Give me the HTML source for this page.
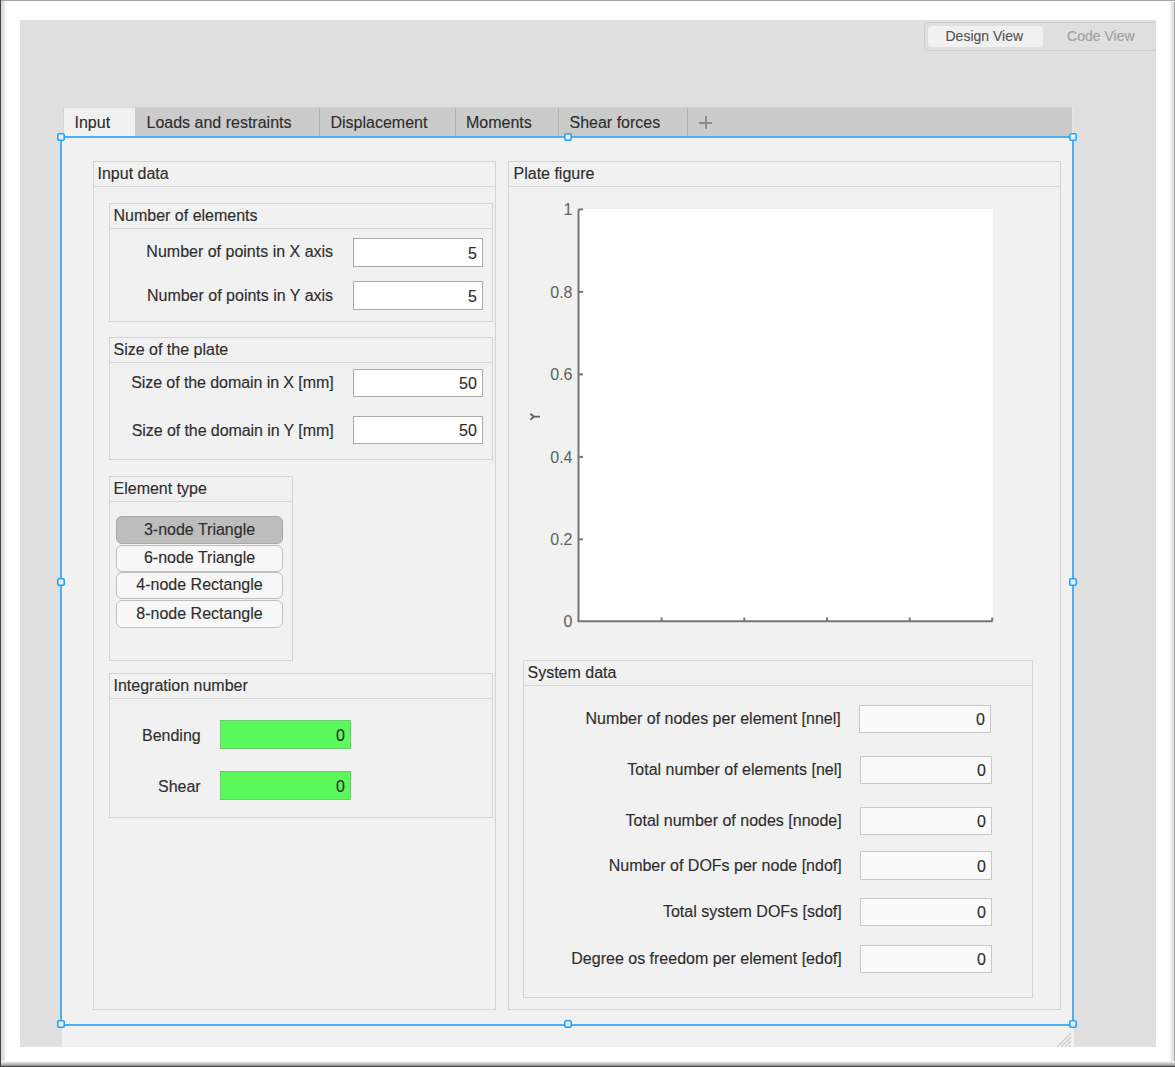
<!DOCTYPE html>
<html><head><meta charset="utf-8"><title>App Designer</title>
<style>
html,body{margin:0;padding:0;}
body{width:1175px;height:1067px;position:relative;overflow:hidden;background:#fff;font-family:"Liberation Sans", sans-serif;}
body>div{position:absolute;}
.t{white-space:nowrap;-webkit-text-stroke:0.15px currentColor;}
</style></head><body>
<div style="left:0px;top:0px;width:1175px;height:1067px;background:#ffffff;"></div>
<div style="left:20px;top:20px;width:1136px;height:1027px;background:#dfdfdf;"></div>
<div style="left:924px;top:22px;width:260px;height:29px;border:1px solid #cecece;border-radius:5px;box-sizing:border-box;background:#dfdfdf;"></div>
<div style="left:928px;top:26px;width:115px;height:21px;background:#f1f1f1;border-radius:4px;"></div>
<div class="t" style="left:945.50px;top:28.55px;font-size:14px;line-height:14px;color:#555555;">Design View</div>
<div class="t" style="left:1067.10px;top:28.55px;font-size:14px;line-height:14px;color:#a0a0a0;">Code View</div>
<div style="left:1156px;top:20px;width:19px;height:40px;background:#ffffff;"></div>
<div style="left:62px;top:136px;width:1012px;height:911px;background:#f1f1f1;"></div>
<div style="left:63px;top:107px;width:1010px;height:30px;background:#cbcbcb;"></div>
<div style="left:1072px;top:107px;width:2px;height:30px;background:#e4e4e4;"></div>
<div style="left:63px;top:107px;width:72px;height:30px;background:#f1f1f1;border-left:1px solid #d3d3d3;border-top:1px solid #dadada;box-sizing:border-box;"></div>
<div style="left:319px;top:108px;width:1px;height:28px;background:#aeaeae;"></div>
<div style="left:455px;top:108px;width:1px;height:28px;background:#aeaeae;"></div>
<div style="left:558px;top:108px;width:1px;height:28px;background:#aeaeae;"></div>
<div style="left:687px;top:108px;width:1px;height:28px;background:#aeaeae;"></div>
<div class="t" style="left:74.50px;top:115.15px;font-size:16px;line-height:16px;color:#2e2e2e;">Input</div>
<div class="t" style="left:146.50px;top:115.15px;font-size:16px;line-height:16px;color:#2e2e2e;">Loads and restraints</div>
<div class="t" style="left:330.50px;top:115.15px;font-size:16px;line-height:16px;color:#2e2e2e;">Displacement</div>
<div class="t" style="left:466.00px;top:115.15px;font-size:16px;line-height:16px;color:#2e2e2e;">Moments</div>
<div class="t" style="left:569.50px;top:115.15px;font-size:16px;line-height:16px;color:#2e2e2e;">Shear forces</div>
<div style="left:699px;top:122px;width:13px;height:2px;background:#8c8c8c;"></div>
<div style="left:705px;top:116px;width:2px;height:13px;background:#8c8c8c;"></div>
<div style="left:93px;top:161px;width:403px;height:849px;border:1px solid #d3d3d3;box-sizing:border-box;"></div>
<div style="left:93px;top:186px;width:403px;height:1px;background:#d6d6d6;"></div>
<div class="t" style="left:97.50px;top:165.75px;font-size:16px;line-height:16px;color:#2e2e2e;">Input data</div>
<div style="left:508px;top:161px;width:553px;height:849px;border:1px solid #d3d3d3;box-sizing:border-box;"></div>
<div style="left:508px;top:186px;width:553px;height:1px;background:#d6d6d6;"></div>
<div class="t" style="left:513.50px;top:165.75px;font-size:16px;line-height:16px;color:#2e2e2e;">Plate figure</div>
<div style="left:109px;top:203px;width:384px;height:119px;border:1px solid #d3d3d3;box-sizing:border-box;"></div>
<div style="left:109px;top:228px;width:384px;height:1px;background:#d6d6d6;"></div>
<div class="t" style="left:113.50px;top:207.75px;font-size:16px;line-height:16px;color:#2e2e2e;">Number of elements</div>
<div style="left:109px;top:337px;width:384px;height:123px;border:1px solid #d3d3d3;box-sizing:border-box;"></div>
<div style="left:109px;top:362px;width:384px;height:1px;background:#d6d6d6;"></div>
<div class="t" style="left:113.50px;top:341.75px;font-size:16px;line-height:16px;color:#2e2e2e;">Size of the plate</div>
<div style="left:109px;top:476px;width:184px;height:185px;border:1px solid #d3d3d3;box-sizing:border-box;"></div>
<div style="left:109px;top:501px;width:184px;height:1px;background:#d6d6d6;"></div>
<div class="t" style="left:113.50px;top:480.75px;font-size:16px;line-height:16px;color:#2e2e2e;">Element type</div>
<div style="left:109px;top:673px;width:384px;height:145px;border:1px solid #d3d3d3;box-sizing:border-box;"></div>
<div style="left:109px;top:698px;width:384px;height:1px;background:#d6d6d6;"></div>
<div class="t" style="left:113.50px;top:677.75px;font-size:16px;line-height:16px;color:#2e2e2e;">Integration number</div>
<div style="left:523px;top:660px;width:510px;height:338px;border:1px solid #d3d3d3;box-sizing:border-box;"></div>
<div style="left:523px;top:685px;width:510px;height:1px;background:#d6d6d6;"></div>
<div class="t" style="left:527.50px;top:664.75px;font-size:16px;line-height:16px;color:#2e2e2e;">System data</div>
<div class="t" style="left:-466.90px;width:800px;text-align:right;top:244.35px;font-size:16px;line-height:16px;color:#2e2e2e;">Number of points in X axis</div>
<div class="t" style="left:-466.90px;width:800px;text-align:right;top:287.55px;font-size:16px;line-height:16px;color:#2e2e2e;">Number of points in Y axis</div>
<div style="left:353px;top:238px;width:130px;height:29px;background:#ffffff;border:1px solid #aaaaaa;box-sizing:border-box;"></div>
<div class="t" style="left:-323.20px;width:800px;text-align:right;top:246.35px;font-size:16px;line-height:16px;color:#2e2e2e;">5</div>
<div style="left:353px;top:281px;width:130px;height:29px;background:#ffffff;border:1px solid #aaaaaa;box-sizing:border-box;"></div>
<div class="t" style="left:-323.20px;width:800px;text-align:right;top:289.35px;font-size:16px;line-height:16px;color:#2e2e2e;">5</div>
<div class="t" style="left:-466.50px;width:800px;text-align:right;top:374.75px;font-size:16px;line-height:16px;color:#2e2e2e;letter-spacing:-0.08px;">Size of the domain in X [mm]</div>
<div class="t" style="left:-466.50px;width:800px;text-align:right;top:423.35px;font-size:16px;line-height:16px;color:#2e2e2e;letter-spacing:-0.08px;">Size of the domain in Y [mm]</div>
<div style="left:353px;top:369px;width:130px;height:28px;background:#ffffff;border:1px solid #aaaaaa;box-sizing:border-box;"></div>
<div class="t" style="left:-323.20px;width:800px;text-align:right;top:376.35px;font-size:16px;line-height:16px;color:#2e2e2e;">50</div>
<div style="left:353px;top:416px;width:130px;height:28px;background:#ffffff;border:1px solid #aaaaaa;box-sizing:border-box;"></div>
<div class="t" style="left:-323.20px;width:800px;text-align:right;top:423.35px;font-size:16px;line-height:16px;color:#2e2e2e;">50</div>
<div style="left:116px;top:516px;width:167px;height:28px;background:#bdbdbd;border:1px solid #a7a7a7;border-radius:6px;box-sizing:border-box;"></div>
<div class="t" style="left:-200.50px;width:800px;text-align:center;top:522.35px;font-size:16px;line-height:16px;color:#2e2e2e;">3-node Triangle</div>
<div style="left:116px;top:545px;width:167px;height:27px;background:#f7f7f7;border:1px solid #bfbfbf;border-radius:6px;box-sizing:border-box;"></div>
<div class="t" style="left:-200.50px;width:800px;text-align:center;top:550.35px;font-size:16px;line-height:16px;color:#2e2e2e;">6-node Triangle</div>
<div style="left:116px;top:572px;width:167px;height:27px;background:#f7f7f7;border:1px solid #bfbfbf;border-radius:6px;box-sizing:border-box;"></div>
<div class="t" style="left:-200.50px;width:800px;text-align:center;top:577.35px;font-size:16px;line-height:16px;color:#2e2e2e;">4-node Rectangle</div>
<div style="left:116px;top:600px;width:167px;height:28px;background:#f7f7f7;border:1px solid #bfbfbf;border-radius:6px;box-sizing:border-box;"></div>
<div class="t" style="left:-200.50px;width:800px;text-align:center;top:606.35px;font-size:16px;line-height:16px;color:#2e2e2e;">8-node Rectangle</div>
<div class="t" style="left:-599.30px;width:800px;text-align:right;top:727.55px;font-size:16px;line-height:16px;color:#2e2e2e;">Bending</div>
<div class="t" style="left:-599.30px;width:800px;text-align:right;top:778.55px;font-size:16px;line-height:16px;color:#2e2e2e;">Shear</div>
<div style="left:220px;top:720px;width:131px;height:29px;background:#5cf95c;border:1px solid #6ccb6c;box-sizing:border-box;"></div>
<div class="t" style="left:-455.20px;width:800px;text-align:right;top:728.35px;font-size:16px;line-height:16px;color:#2e2e2e;">0</div>
<div style="left:220px;top:771px;width:131px;height:29px;background:#5cf95c;border:1px solid #6ccb6c;box-sizing:border-box;"></div>
<div class="t" style="left:-455.20px;width:800px;text-align:right;top:779.35px;font-size:16px;line-height:16px;color:#2e2e2e;">0</div>
<div class="t" style="left:40.70px;width:800px;text-align:right;top:711.35px;font-size:16px;line-height:16px;color:#2e2e2e;">Number of nodes per element [nnel]</div>
<div style="left:859px;top:705px;width:132px;height:28px;background:#fafafa;border:1px solid #c8c8c8;box-sizing:border-box;"></div>
<div class="t" style="left:184.80px;width:800px;text-align:right;top:712.35px;font-size:16px;line-height:16px;color:#2e2e2e;">0</div>
<div class="t" style="left:41.70px;width:800px;text-align:right;top:762.35px;font-size:16px;line-height:16px;color:#2e2e2e;">Total number of elements [nel]</div>
<div style="left:860px;top:756px;width:132px;height:28px;background:#fafafa;border:1px solid #c8c8c8;box-sizing:border-box;"></div>
<div class="t" style="left:185.80px;width:800px;text-align:right;top:763.35px;font-size:16px;line-height:16px;color:#2e2e2e;">0</div>
<div class="t" style="left:41.70px;width:800px;text-align:right;top:813.35px;font-size:16px;line-height:16px;color:#2e2e2e;">Total number of nodes [nnode]</div>
<div style="left:860px;top:807px;width:132px;height:28px;background:#fafafa;border:1px solid #c8c8c8;box-sizing:border-box;"></div>
<div class="t" style="left:185.80px;width:800px;text-align:right;top:814.35px;font-size:16px;line-height:16px;color:#2e2e2e;">0</div>
<div class="t" style="left:41.70px;width:800px;text-align:right;top:858.35px;font-size:16px;line-height:16px;color:#2e2e2e;">Number of DOFs per node [ndof]</div>
<div style="left:860px;top:851px;width:132px;height:29px;background:#fafafa;border:1px solid #c8c8c8;box-sizing:border-box;"></div>
<div class="t" style="left:185.80px;width:800px;text-align:right;top:859.35px;font-size:16px;line-height:16px;color:#2e2e2e;">0</div>
<div class="t" style="left:41.70px;width:800px;text-align:right;top:904.35px;font-size:16px;line-height:16px;color:#2e2e2e;">Total system DOFs [sdof]</div>
<div style="left:860px;top:898px;width:132px;height:28px;background:#fafafa;border:1px solid #c8c8c8;box-sizing:border-box;"></div>
<div class="t" style="left:185.80px;width:800px;text-align:right;top:905.35px;font-size:16px;line-height:16px;color:#2e2e2e;">0</div>
<div class="t" style="left:41.70px;width:800px;text-align:right;top:951.35px;font-size:16px;line-height:16px;color:#2e2e2e;">Degree os freedom per element [edof]</div>
<div style="left:860px;top:945px;width:132px;height:28px;background:#fafafa;border:1px solid #c8c8c8;box-sizing:border-box;"></div>
<div class="t" style="left:185.80px;width:800px;text-align:right;top:952.35px;font-size:16px;line-height:16px;color:#2e2e2e;">0</div>
<div style="left:579px;top:209px;width:414px;height:412px;background:#ffffff;"></div>
<svg style="position:absolute;left:0;top:0" width="1175" height="1067"><g stroke="#767676" stroke-width="2" fill="none"><path d="M578.5 209.4 V621.3 H992.6"/><path d="M578.5 209.4 H583"/><path d="M578.5 291.9 H583"/><path d="M578.5 374.4 H583"/><path d="M578.5 456.9 H583"/><path d="M578.5 539.3 H583"/><path d="M661.6 621.3 V617.5"/><path d="M744.3 621.3 V617.5"/><path d="M827.0 621.3 V617.5"/><path d="M909.7 621.3 V617.5"/><path d="M992.2 621.3 V617.5"/></g><path d="M530.3 413.8 L534 416.7 L530.3 419.6 M534 416.7 H540" stroke="#5e5e5e" stroke-width="1.8" fill="none"/></svg>
<div class="t" style="left:-227.50px;width:800px;text-align:right;top:202.35px;font-size:16px;line-height:16px;color:#606060;-webkit-text-stroke:0;">1</div>
<div class="t" style="left:-227.50px;width:800px;text-align:right;top:284.85px;font-size:16px;line-height:16px;color:#606060;-webkit-text-stroke:0;">0.8</div>
<div class="t" style="left:-227.50px;width:800px;text-align:right;top:367.35px;font-size:16px;line-height:16px;color:#606060;-webkit-text-stroke:0;">0.6</div>
<div class="t" style="left:-227.50px;width:800px;text-align:right;top:449.85px;font-size:16px;line-height:16px;color:#606060;-webkit-text-stroke:0;">0.4</div>
<div class="t" style="left:-227.50px;width:800px;text-align:right;top:532.25px;font-size:16px;line-height:16px;color:#606060;-webkit-text-stroke:0;">0.2</div>
<div class="t" style="left:-227.50px;width:800px;text-align:right;top:614.25px;font-size:16px;line-height:16px;color:#606060;-webkit-text-stroke:0;">0</div>
<div style="left:60px;top:136px;width:1014px;height:2px;background:#50adf0;"></div>
<div style="left:60px;top:1024px;width:1014px;height:2px;background:#50adf0;"></div>
<div style="left:60px;top:136px;width:2px;height:890px;background:#50adf0;"></div>
<div style="left:1072px;top:136px;width:2px;height:890px;background:#50adf0;"></div>
<div style="left:57.3px;top:133.2px;width:8px;height:8px;background:linear-gradient(#ffffff,#d2e6ff);box-shadow:inset 0 0 0 1.6px #22a2ff;border-radius:2px;"></div>
<div style="left:57.3px;top:577.6px;width:8px;height:8px;background:linear-gradient(#ffffff,#d2e6ff);box-shadow:inset 0 0 0 1.6px #22a2ff;border-radius:2px;"></div>
<div style="left:57.3px;top:1020.4000000000001px;width:8px;height:8px;background:linear-gradient(#ffffff,#d2e6ff);box-shadow:inset 0 0 0 1.6px #22a2ff;border-radius:2px;"></div>
<div style="left:564.1px;top:133.2px;width:8px;height:8px;background:linear-gradient(#ffffff,#d2e6ff);box-shadow:inset 0 0 0 1.6px #22a2ff;border-radius:2px;"></div>
<div style="left:564.1px;top:1020.4000000000001px;width:8px;height:8px;background:linear-gradient(#ffffff,#d2e6ff);box-shadow:inset 0 0 0 1.6px #22a2ff;border-radius:2px;"></div>
<div style="left:1069px;top:133.2px;width:8px;height:8px;background:linear-gradient(#ffffff,#d2e6ff);box-shadow:inset 0 0 0 1.6px #22a2ff;border-radius:2px;"></div>
<div style="left:1069px;top:577.6px;width:8px;height:8px;background:linear-gradient(#ffffff,#d2e6ff);box-shadow:inset 0 0 0 1.6px #22a2ff;border-radius:2px;"></div>
<div style="left:1069px;top:1020.4000000000001px;width:8px;height:8px;background:linear-gradient(#ffffff,#d2e6ff);box-shadow:inset 0 0 0 1.6px #22a2ff;border-radius:2px;"></div>
<svg style="position:absolute;left:1050px;top:1028px" width="24" height="20"><g stroke="#cdcdcd" stroke-width="1.2"><path d="M7 19 L21 5"/><path d="M11 19 L21 9"/><path d="M15 19 L21 13"/><path d="M19 19 L21 17"/></g></svg>
<div style="left:0px;top:0px;width:1175px;height:1px;background:#a6a6a6;"></div>
<div style="left:1px;top:1px;width:5px;height:1066px;background:linear-gradient(90deg,#d8d8d8,#dedede 40%,#f0f0f0 80%,#ffffff);"></div>
<div style="left:0px;top:0px;width:1px;height:1067px;background:#444444;"></div>
<div style="left:1169px;top:2px;width:5px;height:1065px;background:linear-gradient(90deg,#ffffff,#efefef 40%,#dddddd 90%,#c8c8c8);"></div>
<div style="left:1174px;top:2px;width:1px;height:1065px;background:#adadad;"></div>
<div style="left:1px;top:1061px;width:1174px;height:5px;background:linear-gradient(#ffffff,#d8d8d8 35%,#a8a8a8 80%,#8a8a8a);"></div>
<div style="left:0px;top:1066px;width:1175px;height:1px;background:#444444;"></div>
</body></html>
